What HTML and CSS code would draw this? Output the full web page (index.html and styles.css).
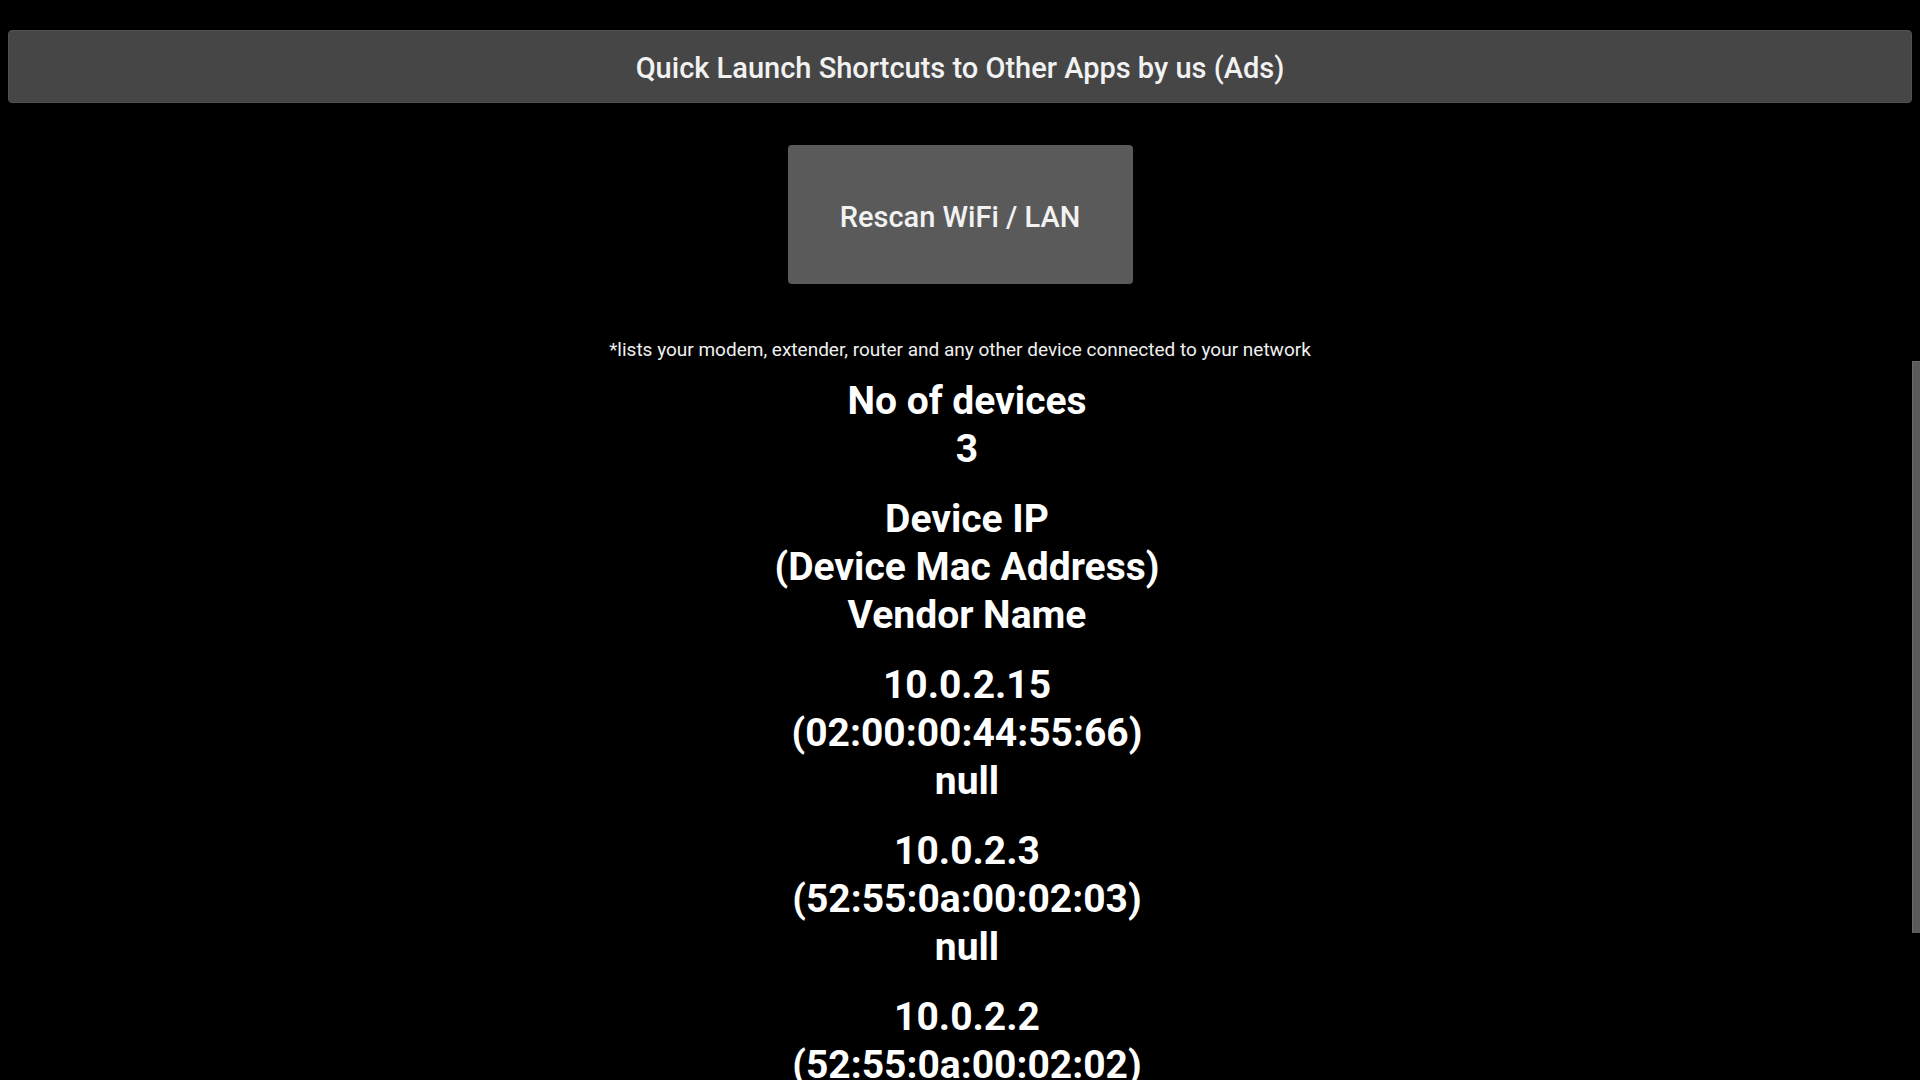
FILE: index.html
```html
<!DOCTYPE html>
<html lang="en">
<head>
<meta charset="utf-8">
<title>Network Scanner</title>
<link rel="stylesheet" href="styles.css">
</head>
<body>
<div class="page">
  <div class="ads-bar">Quick Launch Shortcuts to Other Apps by us (Ads)</div>
  <div class="rescan">Rescan WiFi / LAN</div>
  <p class="note">*lists your modem, extender, router and any other device connected to your network</p>
  <div class="list">
    <div class="block">
      <div>No of devices</div>
      <div>3</div>
    </div>
    <div class="block">
      <div>Device IP</div>
      <div>(Device Mac Address)</div>
      <div>Vendor Name</div>
    </div>
    <div class="block">
      <div>10.0.2.15</div>
      <div>(02:00:00:44:55:66)</div>
      <div>null</div>
    </div>
    <div class="block">
      <div>10.0.2.3</div>
      <div>(52:55:0a:00:02:03)</div>
      <div>null</div>
    </div>
    <div class="block">
      <div>10.0.2.2</div>
      <div>(52:55:0a:00:02:02)</div>
      <div>null</div>
    </div>
  </div>
</div>
<div class="scroll-thumb"></div>
</body>
</html>
```
FILE: styles.css
```css
html, body {
  margin: 0;
  padding: 0;
  background: #000;
  height: 100%;
  overflow: hidden;
}
body {
  font-family: Roboto, "Noto Sans", "Liberation Sans", sans-serif;
  color: #fff;
  position: relative;
}
.page {
  display: flex;
  flex-direction: column;
  align-items: center;
  padding: 30px 8px 0;
}
.ads-bar {
  align-self: stretch;
  height: 73px;
  padding-top: 2px;
  background: #464646;
  border: 1px solid #515151;
  border-radius: 4px;
  box-sizing: border-box;
  display: flex;
  align-items: center;
  justify-content: center;
  font-size: 29px;
  font-weight: 500;
  color: #f2f2f2;
}
.rescan {
  margin-top: 42px;
  width: 345px;
  height: 139px;
  padding-top: 4px;
  box-sizing: border-box;
  background: #5a5a5b;
  border-radius: 4px;
  display: flex;
  align-items: center;
  justify-content: center;
  font-size: 29px;
  font-weight: 500;
  color: #f2f2f2;
}
.note {
  margin: 53px 0 0;
  font-size: 19px;
  line-height: 26px;
  color: #f0f0f0;
}
.list {
  display: flex;
  flex-direction: column;
  align-items: center;
  gap: 22px;
  margin-top: 14px;
  padding-left: 14px;
}
.block {
  display: flex;
  flex-direction: column;
  align-items: center;
  font-size: 39px;
  font-weight: 700;
  line-height: 48px;
  white-space: nowrap;
}
.scroll-thumb {
  position: absolute;
  right: 0;
  top: 361px;
  width: 8px;
  height: 572px;
  background: #5a5a5a;
  border-left: 1px solid #6a6a6a;
  border-top: 1px solid #6a6a6a;
  box-sizing: border-box;
}
```
